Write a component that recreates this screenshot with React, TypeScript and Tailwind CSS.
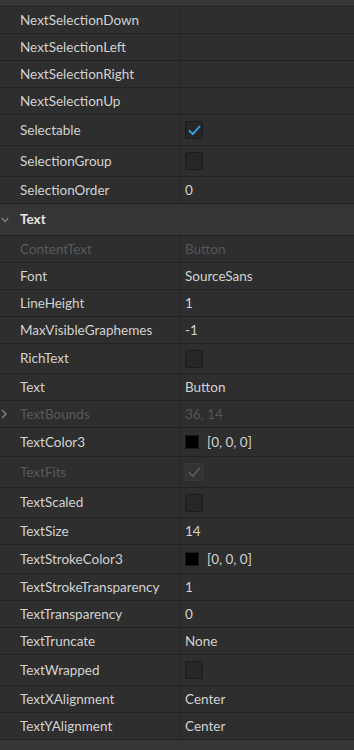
import React from "react";

type Row =
    | { kind: "text"; label: string; value?: string; h?: number; dim?: boolean; expand?: boolean }
    | { kind: "check"; label: string; checked?: boolean; h?: number; dim?: boolean }
    | { kind: "color"; label: string; value: string; h?: number }
    | { kind: "header"; label: string; h?: number };

const rows: Row[] = [
    { kind: "text", label: "NextSelectionDown" },
    { kind: "text", label: "NextSelectionLeft" },
    { kind: "text", label: "NextSelectionRight" },
    { kind: "text", label: "NextSelectionUp" },
    { kind: "check", label: "Selectable", checked: true, h: 31 },
    { kind: "check", label: "SelectionGroup", h: 31 },
    { kind: "text", label: "SelectionOrder", value: "0" },
    { kind: "header", label: "Text", h: 32 },
    { kind: "text", label: "ContentText", value: "Button", dim: true },
    { kind: "text", label: "Font", value: "SourceSans" },
    { kind: "text", label: "LineHeight", value: "1" },
    { kind: "text", label: "MaxVisibleGraphemes", value: "-1" },
    { kind: "check", label: "RichText", h: 30 },
    { kind: "text", label: "Text", value: "Button" },
    { kind: "text", label: "TextBounds", value: "36, 14", dim: true, expand: true },
    { kind: "color", label: "TextColor3", value: "[0, 0, 0]", h: 29 },
    { kind: "check", label: "TextFits", checked: true, dim: true, h: 31 },
    { kind: "check", label: "TextScaled", h: 30 },
    { kind: "text", label: "TextSize", value: "14" },
    { kind: "color", label: "TextStrokeColor3", value: "[0, 0, 0]", h: 29 },
    { kind: "text", label: "TextStrokeTransparency", value: "1" },
    { kind: "text", label: "TextTransparency", value: "0" },
    { kind: "text", label: "TextTruncate", value: "None" },
    { kind: "check", label: "TextWrapped", h: 31 },
    { kind: "text", label: "TextXAlignment", value: "Center" },
    { kind: "text", label: "TextYAlignment", value: "Center" },
];

const Check = ({ checked, dim }: { checked?: boolean; dim?: boolean }) => (
    <div
        className={`w-[18px] h-[18px] rounded-[2px] border flex items-center justify-center ${
            dim ? "bg-[#333] border-[#3a3a3a]" : "bg-[#262626] border-[#1c1c1c]"
        }`}
    >
        {checked && (
            <svg width="13" height="11" viewBox="0 0 13 11" fill="none">
                <path
                    d="M1.5 5.8 L4.8 9.2 L11.5 1.5"
                    stroke={dim ? "#5a5a5a" : "#35a4f0"}
                    strokeWidth="1.8"
                    strokeLinecap="round"
                    strokeLinejoin="round"
                />
            </svg>
        )}
    </div>
);

const PropRow = ({ row }: { row: Row }) => {
    const h = row.h ?? 27;

    if (row.kind === "header") {
        return (
            <div className="flex items-center bg-[#353535] border-b border-[#232323]" style={{ height: h }}>
                <svg className="ml-[1px] mr-[11px]" width="8" height="6" viewBox="0 0 8 6" fill="none">
                    <path d="M0.8 1 L4 4.6 L7.2 1" stroke="#8a8a8a" strokeWidth="1.2" />
                </svg>
                <span className="text-[13.5px] font-bold text-[#e4e4e4]">{row.label}</span>
            </div>
        );
    }

    const dim = "dim" in row && row.dim;
    const labelColor = dim ? "text-[#595959]" : "text-[#d2d2d2]";

    return (
        <div className="flex bg-[#2e2e2e] border-b border-[#232323]" style={{ height: h }}>
            <div className="relative w-[180px] shrink-0 border-r border-[#242424] flex items-center pl-[20px]">
                {row.kind === "text" && row.expand && (
                    <svg className="absolute left-[1px]" width="6" height="10" viewBox="0 0 6 10" fill="none">
                        <path d="M1 1 L5 5 L1 9" stroke="#8a8a8a" strokeWidth="1.2" />
                    </svg>
                )}
                <span className={`text-[13.5px] ${labelColor}`}>{row.label}</span>
            </div>
            <div className="flex-1 flex items-center pl-[5px]">
                {row.kind === "text" && row.value && (
                    <span className={`text-[13.5px] ${dim ? "text-[#555]" : "text-[#d2d2d2]"}`}>{row.value}</span>
                )}
                {row.kind === "check" && <Check checked={row.checked} dim={row.dim} />}
                {row.kind === "color" && (
                    <div className="flex items-center gap-[8px]">
                        <div className="w-[14px] h-[14px] bg-black border border-[#1a1a1a]" />
                        <span className="text-[13.5px] text-[#d2d2d2]">{row.value}</span>
                    </div>
                )}
            </div>
        </div>
    );
};

export default function App() {
    return (
        <div className="w-[354px] h-[750px] overflow-hidden bg-[#353535] font-['Lato',sans-serif]">
            <div className="h-[7px] bg-[#363636] border-b border-[#232323]" />
            {rows.map((row, i) => (
                <PropRow key={i} row={row} />
            ))}
            <div className="h-[10px] bg-[#363636]" />
        </div>
    );
}
